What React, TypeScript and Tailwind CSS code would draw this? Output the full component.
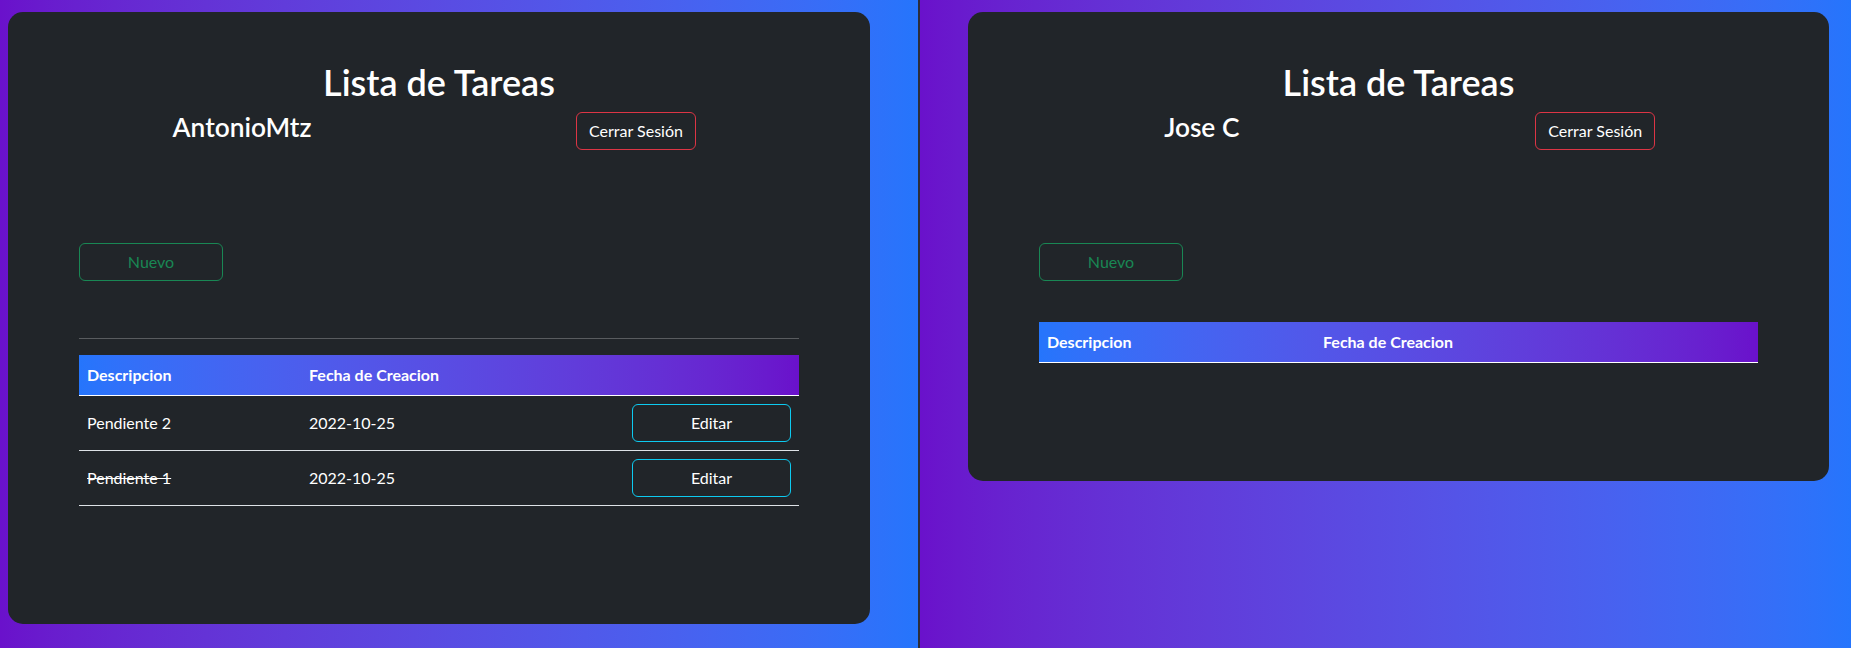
import React from "react";

type Task = { id: number; descripcion: string; fecha: string; hecha: boolean };

type Pane = {
  usuario: string;
  tareas: Task[];
  conSeparador: boolean;
  cardClass: string;
  col1Class: string;
};

const panes: Pane[] = [
  {
    usuario: "AntonioMtz",
    tareas: [
      { id: 2, descripcion: "Pendiente 2", fecha: "2022-10-25", hecha: false },
      { id: 1, descripcion: "Pendiente 1", fecha: "2022-10-25", hecha: true },
    ],
    conSeparador: true,
    cardClass: "ml-[8px] w-[862px]",
    col1Class: "w-[222px]",
  },
  {
    usuario: "Jose C",
    tareas: [],
    conSeparador: false,
    cardClass: "ml-[48px] w-[861px]",
    col1Class: "w-[276px]",
  },
];

const ListaTareas = ({ pane }: { pane: Pane }) => {
  return (
    <div
      className={`mt-[12px] flex flex-col rounded-[15px] bg-[#212529] px-[71px] pt-[49px] pb-[118px] text-white ${pane.cardClass}`}
    >
      {/* Encabezado */}
      <h1 className="mb-2 text-center text-[36px] leading-[1.2] font-semibold">
        Lista de Tareas
      </h1>
      <div className="-mx-[34px] grid grid-cols-2 items-start">
        <h3 className="text-center text-[26.3px] leading-[1.2] font-semibold">
          {pane.usuario}
        </h3>
        <div className="flex justify-center">
          <button
            type="button"
            className="h-[38px] w-[120px] rounded-[6px] border border-[#dc3545] text-[16px] text-white"
          >
            Cerrar Sesión
          </button>
        </div>
      </div>

      {/* Nuevo */}
      <div className="mt-[93px] mb-[41px]">
        <button
          type="button"
          className="h-[38px] w-[144px] rounded-[6px] border border-[#198754] text-[16px] text-[#198754]"
        >
          Nuevo
        </button>
      </div>

      {pane.conSeparador && <hr className="my-4 border-t border-[#595c5f]" />}

      {/* Tabla */}
      <table className="w-full table-fixed border-collapse text-[16px]">
        <thead>
          <tr className="border-b border-white bg-linear-to-r from-[#2575fc] to-[#6a11cb]">
            <th className={`px-2 py-2 text-left leading-6 font-bold ${pane.col1Class}`}>
              Descripcion
            </th>
            <th className="px-2 py-2 text-left leading-6 font-bold">Fecha de Creacion</th>
            <th className="w-[176px] px-2 py-2"></th>
          </tr>
        </thead>
        <tbody>
          {pane.tareas.map((t) => (
            <tr key={t.id} className="border-b border-[#dee2e6]">
              <td className={`px-2 py-2 leading-6 ${t.hecha ? "line-through" : ""}`}>
                {t.descripcion}
              </td>
              <td className="px-2 py-2 leading-6">{t.fecha}</td>
              <td className="px-2 py-2 text-right">
                <button
                  type="button"
                  className="h-[38px] w-[159px] rounded-[6px] border border-[#0dcaf0] text-[16px] text-white"
                >
                  Editar
                </button>
              </td>
            </tr>
          ))}
        </tbody>
      </table>
    </div>
  );
};

const App = () => {
  return (
    <div
      className="flex h-[648px] w-[1851px] overflow-hidden"
      style={{ fontFamily: '"Segoe UI", Lato, "Noto Sans", sans-serif' }}
    >
      <div className="h-full w-[918px] shrink-0 bg-linear-to-r from-[#6a11cb] to-[#2575fc]">
        <ListaTareas pane={panes[0]} />
      </div>
      <div className="h-full w-[2px] shrink-0 bg-[#2b2d3a]" />
      <div className="h-full flex-1 bg-linear-to-r from-[#6a11cb] to-[#2575fc]">
        <ListaTareas pane={panes[1]} />
      </div>
    </div>
  );
};

export default App;
